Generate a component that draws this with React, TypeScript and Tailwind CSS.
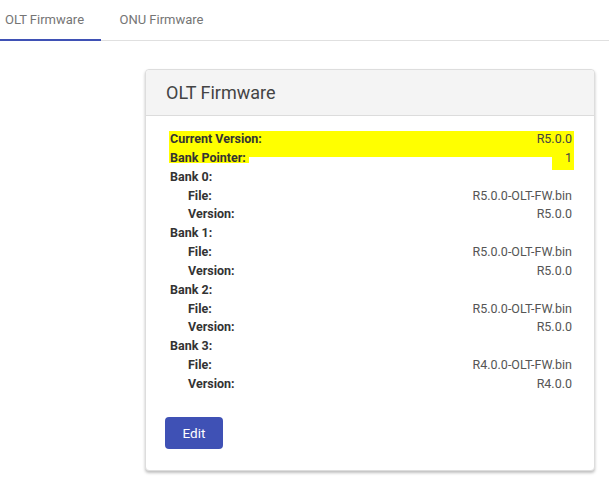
const rows: { label: string; value: string; indent?: boolean }[] = [
  { label: "Bank 0:", value: "" },
  { label: "File:", value: "R5.0.0-OLT-FW.bin", indent: true },
  { label: "Version:", value: "R5.0.0", indent: true },
  { label: "Bank 1:", value: "" },
  { label: "File:", value: "R5.0.0-OLT-FW.bin", indent: true },
  { label: "Version:", value: "R5.0.0", indent: true },
  { label: "Bank 2:", value: "" },
  { label: "File:", value: "R5.0.0-OLT-FW.bin", indent: true },
  { label: "Version:", value: "R5.0.0", indent: true },
  { label: "Bank 3:", value: "" },
  { label: "File:", value: "R4.0.0-OLT-FW.bin", indent: true },
  { label: "Version:", value: "R4.0.0", indent: true },
];

export default function App() {
  return (
    <div className="min-h-[479px] bg-white font-['Roboto',sans-serif] text-[#333]">
      <div className="flex border-b border-[#e0e0e0] h-[41px]">
        <div className="w-[101px] flex items-center justify-center border-b-2 border-[#3f51b5] -mb-px text-[13px] text-[#757575] pr-[12px]">
          OLT Firmware
        </div>
        <div className="w-[118px] flex items-center justify-center text-[13px] text-[#757575] pl-[3px]">
          ONU Firmware
        </div>
      </div>

      <div className="ml-[145px] mt-[28px] w-[450px] rounded border border-[#ddd] bg-white shadow-[0_2px_3px_rgba(0,0,0,0.25)]">
        <div className="h-[46px] flex items-center px-[20px] bg-[#f4f4f4] border-b border-[#dcdcdc] rounded-t">
          <span className="text-[18px] text-[#444]">OLT Firmware</span>
        </div>
        <div className="pl-[24px] pr-[22px] pt-[14px] pb-[21px]">
          <div className="relative text-[12.5px] leading-[18.85px]">
            <div className="absolute left-[-1px] right-[-2px] top-[1px] h-[19px] bg-[#ffff00]" />
            <div className="absolute left-[-1px] w-[80px] top-[19px] h-[14px] bg-[#ffff00]" />
            <div className="absolute left-[78px] right-[18px] top-[19px] h-[8px] bg-[#ffff00]" />
            <div className="absolute right-[-2px] w-[22px] top-[19px] h-[21px] bg-[#ffff00]" />
            <div className="relative flex justify-between">
              <span className="font-bold">Current Version:</span>
              <span className="text-[#444]">R5.0.0</span>
            </div>
            <div className="relative flex justify-between">
              <span className="font-bold">Bank Pointer:</span>
              <span className="text-[#444]">1</span>
            </div>
            {rows.map((r, i) => (
              <div key={i} className="flex justify-between">
                <span className={`font-bold ${r.indent ? "pl-[18px]" : ""}`}>{r.label}</span>
                <span className="text-[#555]">{r.value}</span>
              </div>
            ))}
          </div>
          <button className="mt-[23px] -ml-[5px] w-[58px] h-[32px] rounded bg-[#3f51b5] text-white text-[13.5px]">
            Edit
          </button>
        </div>
      </div>
    </div>
  );
}
